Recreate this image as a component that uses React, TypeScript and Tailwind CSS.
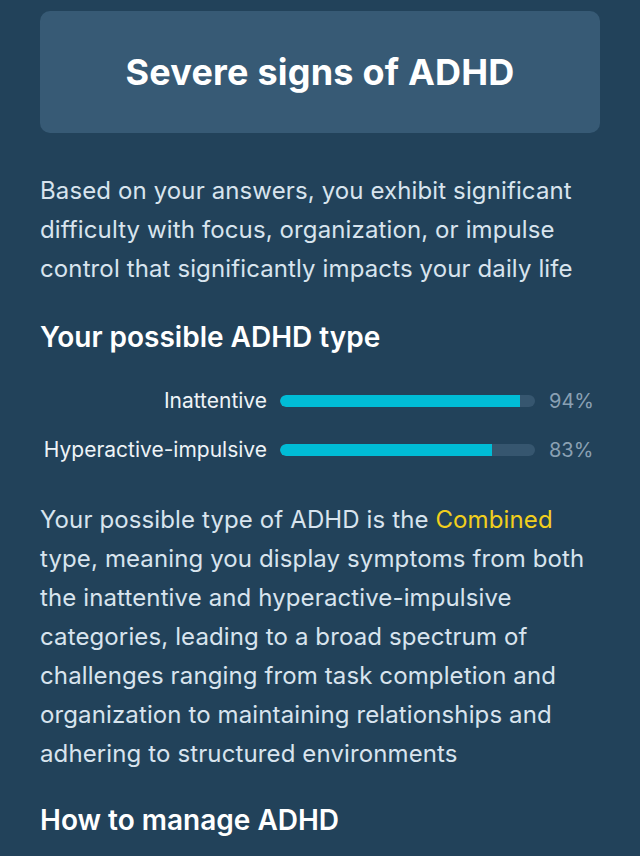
export default function App() {
  const types = [
    { label: "Inattentive", value: 94 },
    { label: "Hyperactive-impulsive", value: 83 },
  ];

  return (
    <div
      className="min-h-[856px] bg-[#22425a] px-10 pt-[11px] text-[#d8e4ee]"
      style={{ fontFamily: "Inter, 'Noto Sans', sans-serif" }}
    >
      <div className="flex h-[122px] items-center justify-center rounded-[10px] bg-[#375a75]">
        <h1 className="text-[36px] font-bold tracking-[0.2px] text-white">Severe signs of ADHD</h1>
      </div>

      <p className="mt-[38px] text-[24px] leading-[39px] tracking-[0.12px]">
        Based on your answers, you exhibit significant difficulty with focus, organization, or
        impulse control that significantly impacts your daily life
      </p>

      <h2 className="mt-[33px] text-[28px] font-semibold leading-[32px] text-white">
        Your possible ADHD type
      </h2>

      <div className="mt-[36px] flex flex-col gap-[25px]">
        {types.map((t) => (
          <div key={t.label} className="flex h-[24px] items-center">
            <span className="w-[227px] text-right text-[21px] text-[#eef3f7]">{t.label}</span>
            <div className="ml-[13px] h-[12px] w-[255px] overflow-hidden rounded-full bg-[#36566f]">
              <div className="h-full rounded-l-full bg-[#00bcd6]" style={{ width: `${t.value}%` }} />
            </div>
            <span className="ml-[14px] text-[20px] text-[#8aa0b3]">{t.value}%</span>
          </div>
        ))}
      </div>

      <p className="mt-[38px] text-[24px] leading-[39px] tracking-[0.12px]">
        Your possible type of ADHD is the <span className="text-[#f2cf1d]">Combined</span> type,
        meaning you display symptoms from both the inattentive and hyperactive-impulsive
        categories, leading to a broad spectrum of challenges ranging from task completion and
        organization to maintaining relationships and adhering to structured environments
      </p>

      <h2 className="mt-[31px] text-[28px] font-semibold leading-[32px] text-white">
        How to manage ADHD
      </h2>
    </div>
  );
}
